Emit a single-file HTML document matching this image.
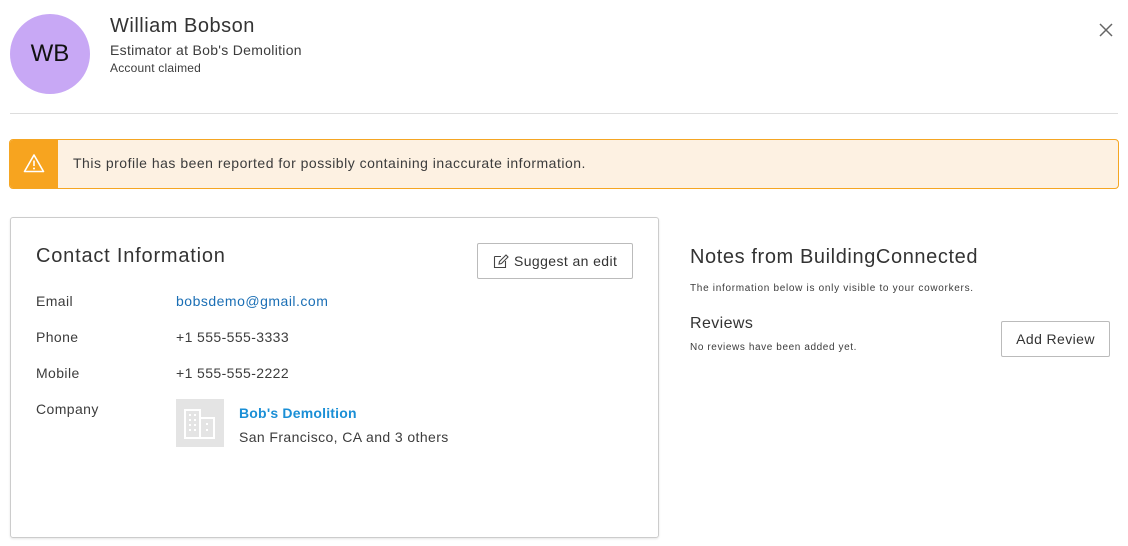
<!DOCTYPE html>
<html><head><style>
*{box-sizing:border-box;margin:0;padding:0}
body{width:1128px;height:546px;background:#fff;font-family:"Liberation Sans",sans-serif;color:#3c3c3c;position:relative;overflow:hidden;letter-spacing:0.4px}
.abs{position:absolute;white-space:nowrap}
</style></head><body>
<div class="abs" style="left:10px;top:14px;width:80px;height:80px;border-radius:50%;background:#c8a8f5;text-align:center;line-height:80px;font-size:24px;color:#111;letter-spacing:0">WB</div>
<div class="abs" style="left:110px;top:15px;font-size:20px;color:#333;letter-spacing:0.5px">William Bobson</div>
<div class="abs" style="left:110px;top:42px;font-size:14px;letter-spacing:0.3px">Estimator at Bob's Demolition</div>
<div class="abs" style="left:110px;top:61px;font-size:12px;letter-spacing:0.2px">Account claimed</div>
<svg class="abs" style="left:1098px;top:22px" width="16" height="16"><path d="M2 2L14 14M14 2L2 14" stroke="#666" stroke-width="1.5"/></svg>
<div class="abs" style="left:10px;top:113px;width:1108px;height:1px;background:#ddd"></div>
<div class="abs" style="left:9px;top:139px;width:1110px;height:50px;border:1px solid #f5a623;border-radius:4px;background:#fdf1e2;overflow:hidden">
<div style="position:absolute;left:0;top:0;width:48px;height:48px;background:#f7a41f"></div>
<svg style="position:absolute;left:13px;top:13px" width="22" height="20"><path d="M11 2L20.5 18.5H1.5Z" fill="none" stroke="#fff" stroke-width="1.6" stroke-linejoin="round"/><path d="M11 7.5V13" stroke="#fff" stroke-width="1.6"/><circle cx="11" cy="15.5" r="1" fill="#fff"/></svg>
<div style="position:absolute;left:63px;top:15px;font-size:14px;letter-spacing:0.5px">This profile has been reported for possibly containing inaccurate information.</div>
</div>
<div class="abs" style="left:10px;top:217px;width:649px;height:321px;border:1px solid #ccc;border-radius:3px;box-shadow:0 1px 2px rgba(0,0,0,.1)"></div>
<div class="abs" style="left:36px;top:245px;font-size:20px;color:#333;letter-spacing:0.8px">Contact Information</div>
<div class="abs" style="left:477px;top:243px;width:156px;height:36px;border:1px solid #bbb;border-radius:2px"></div>
<svg class="abs" style="left:493px;top:253px" width="16" height="16"><path d="M1.5 3.5H8M1.5 3.5V14.5H12.5V8" fill="none" stroke="#444" stroke-width="1.1"/><path d="M6 11L6.5 8.5L13 2L15 4L8.5 10.5Z" fill="none" stroke="#444" stroke-width="1.1"/></svg>
<div class="abs" style="left:514px;top:253px;font-size:14px;color:#333">Suggest an edit</div>
<div class="abs" style="left:36px;top:293px;font-size:14px">Email</div>
<div class="abs" style="left:176px;top:293px;font-size:14px;color:#1b6fb5;letter-spacing:0.5px">bobsdemo@gmail.com</div>
<div class="abs" style="left:36px;top:329px;font-size:14px">Phone</div>
<div class="abs" style="left:176px;top:329px;font-size:14px">+1 555-555-3333</div>
<div class="abs" style="left:36px;top:365px;font-size:14px">Mobile</div>
<div class="abs" style="left:176px;top:365px;font-size:14px">+1 555-555-2222</div>
<div class="abs" style="left:36px;top:401px;font-size:14px">Company</div>
<div class="abs" style="left:176px;top:399px;width:48px;height:48px;background:#e4e4e4"></div>
<svg class="abs" style="left:176px;top:399px" width="48" height="48"><rect x="9" y="11" width="15" height="28" fill="none" stroke="#fff" stroke-width="2"/><rect x="24" y="19" width="14" height="20" fill="none" stroke="#fff" stroke-width="2"/><g fill="#fff"><rect x="13" y="15" width="2" height="2"/><rect x="18" y="15" width="2" height="2"/><rect x="13" y="20" width="2" height="2"/><rect x="18" y="20" width="2" height="2"/><rect x="13" y="25" width="2" height="2"/><rect x="18" y="25" width="2" height="2"/><rect x="13" y="30" width="2" height="2"/><rect x="18" y="30" width="2" height="2"/><rect x="30" y="24" width="2" height="2"/><rect x="30" y="30" width="2" height="2"/></g></svg>
<div class="abs" style="left:239px;top:405px;font-size:14px;font-weight:bold;color:#1a8fd6;letter-spacing:0.2px">Bob's Demolition</div>
<div class="abs" style="left:239px;top:429px;font-size:14px">San Francisco, CA and 3 others</div>
<div class="abs" style="left:690px;top:246px;font-size:20px;color:#333;letter-spacing:0.6px">Notes from BuildingConnected</div>
<div class="abs" style="left:690px;top:283px;font-size:10px;letter-spacing:0.7px">The information below is only visible to your coworkers.</div>
<div class="abs" style="left:690px;top:315px;font-size:16px;color:#333">Reviews</div>
<div class="abs" style="left:690px;top:342px;font-size:10px;letter-spacing:0.6px">No reviews have been added yet.</div>
<div class="abs" style="left:1001px;top:321px;width:109px;height:36px;border:1px solid #bbb;border-radius:2px;text-align:center;line-height:34px;font-size:14px;color:#333">Add Review</div>
</body></html>
